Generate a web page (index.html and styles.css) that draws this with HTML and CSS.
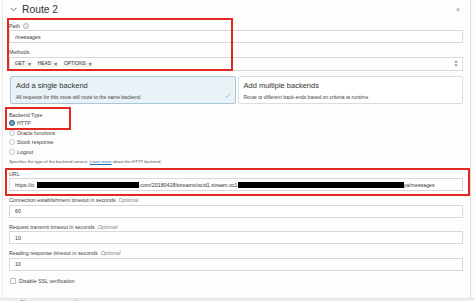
FILE: index.html
```html
<!DOCTYPE html>
<html lang="en">
<head>
  <meta charset="UTF-8" />
  <meta name="viewport" content="width=device-width, initial-scale=1.0" />
  <title>Route 2</title>
  <link rel="stylesheet" href="styles.css">
</head>
<body>
  <div class="page">
    <section class="route">
      <header class="route-head">
        <svg class="chev" width="7" height="5" viewBox="0 0 7 5"><polyline points="0.5,0.8 3.5,3.8 6.5,0.8" fill="none" stroke="#555" stroke-width="0.8"/></svg>
        <h2>Route 2</h2>
        <span class="close">&times;</span>
      </header>

      <div class="form">
        <div class="field first">
          <label class="lbl">Path
            <svg class="info" width="6" height="6" viewBox="0 0 6 6"><circle cx="3" cy="3" r="2.5" fill="none" stroke="#888" stroke-width="0.6"/><line x1="3" y1="2.6" x2="3" y2="4.4" stroke="#888" stroke-width="0.6"/><circle cx="3" cy="1.7" r="0.35" fill="#888"/></svg>
          </label>
          <div class="input">/messages</div>
        </div>

        <div class="field">
          <label class="lbl">Methods</label>
          <div class="input select">
            <span class="tag">GET <b>&times;</b></span>
            <span class="tag">HEAD <b>&times;</b></span>
            <span class="tag">OPTIONS <b>&times;</b></span>
            <svg class="spin" width="4" height="7" viewBox="0 0 4 7"><polygon points="2,0.5 3.6,2.6 0.4,2.6" fill="#777"/><polygon points="2,6.5 3.6,4.4 0.4,4.4" fill="#777"/></svg>
          </div>
        </div>

        <div class="cards">
          <div class="card active">
            <div class="card-title">Add a single backend</div>
            <div class="card-sub">All requests for this route will route to the same backend</div>
            <svg class="tick" width="6" height="5" viewBox="0 0 6 5"><polyline points="0.5,2.8 2,4.3 5.5,0.6" fill="none" stroke="#8a9aa3" stroke-width="0.6"/></svg>
          </div>
          <div class="card">
            <div class="card-title">Add multiple backends</div>
            <div class="card-sub">Route to different back-ends based on criteria at runtime</div>
          </div>
        </div>

        <div class="lbl type-lbl">Backend Type</div>
        <div class="radios">
          <div class="radio on"><span class="dot"></span>HTTP</div>
          <div class="radio"><span class="dot"></span>Oracle functions</div>
          <div class="radio"><span class="dot"></span>Stock response</div>
          <div class="radio"><span class="dot"></span>Logout</div>
        </div>
        <p class="help">Specifies the type of the backend service. <a href="#">Learn more</a> about the HTTP backend.</p>

        <div class="field">
          <label class="lbl">URL</label>
          <div class="input">https://o<span class="redact r1"></span>.com/20180418/streams/ocid1.stream.oc1<span class="redact r2"></span>ya/messages</div>
        </div>

        <div class="field">
          <label class="lbl">Connection establishment timeout in seconds <i>Optional</i></label>
          <div class="input">60</div>
        </div>

        <div class="field">
          <label class="lbl">Request transmit timeout in seconds <i>Optional</i></label>
          <div class="input">10</div>
        </div>

        <div class="field">
          <label class="lbl">Reading response timeout in seconds <i>Optional</i></label>
          <div class="input">10</div>
        </div>

        <div class="check"><span class="box"></span>Disable SSL verification</div>
      </div>
    </section>

    <div class="policies">
      <svg width="5" height="6" viewBox="0 0 5 6"><polyline points="1,0.8 3.6,3 1,5.2" fill="none" stroke="#555" stroke-width="0.7"/></svg>
      <a href="#">Show route request policies</a>
    </div>

    <div class="mark m1"></div>
    <div class="mark m2"></div>
    <div class="mark m3"></div>
  </div>
</body>
</html>
```

FILE: styles.css
```css
body {
  margin: 0;
  width: 474px;
  height: 301px;
  overflow: hidden;
  background: #fcfcfc;
  color: #3a3a3a;
  font-family: "Liberation Sans", Arial, sans-serif;
}

.page {
  position: relative;
  height: 301px;
}

.route {
  box-sizing: border-box;
  margin-left: 2px;
  width: 469px;
  height: 298px;
  background: #fdfdfd;
  border-left: 1px solid #e8e8e8;
  border-right: 1px solid #dcdcdc;
}

.route-head {
  height: 18px;
  display: flex;
  align-items: center;
  padding-left: 7px;
  padding-right: 10px;
}

.route-head .chev {
  margin-right: 5px;
}

.route-head h2 {
  margin: 0;
  font-size: 10.3px;
  font-weight: normal;
  color: #333;
  flex: 1;
}

.close {
  font-size: 7px;
  color: #888;
}

.form {
  padding: 0 7px 0 6px;
}

.lbl {
  display: flex;
  align-items: center;
  gap: 3px;
  height: 7px;
  font-size: 5.3px;
  color: #444;
  white-space: nowrap;
}

.lbl i {
  color: #888;
}

.field {
  margin-top: 5.5px;
}

.field.first {
  margin-top: 4px;
}

.field .input {
  margin-top: 1px;
}

.input {
  box-sizing: border-box;
  height: 13px;
  display: flex;
  align-items: center;
  padding-left: 5px;
  border: 1px solid #d8d8d8;
  background: #fff;
  font-size: 5.3px;
  color: #333;
  white-space: nowrap;
}

.select {
  height: 14px;
  gap: 5px;
  padding-left: 4px;
  padding-right: 4px;
}

.tag {
  display: flex;
  align-items: center;
  gap: 3px;
  padding: 0 1px;
  background: #f4f4f4;
  font-size: 4.8px;
}

.tag b {
  font-size: 5px;
  color: #444;
}

.spin {
  margin-left: auto;
}

.redact {
  display: inline-block;
  height: 6px;
  background: #000;
}

.r1 {
  width: 102px;
  margin-left: 3px;
}

.r2 {
  width: 166px;
}

.cards {
  display: flex;
  gap: 2px;
  margin-top: 5px;
  padding-left: 1px;
}

.card {
  position: relative;
  box-sizing: border-box;
  flex: 1;
  height: 28px;
  padding: 4px 5px 0;
  border: 1px solid #dcdcdc;
  border-radius: 2px;
  background: #fff;
}

.card.active {
  background: #e9f2f6;
  border-color: #a9c6d4;
}

.card-title {
  font-size: 7.5px;
  line-height: 9px;
  color: #333;
}

.card-sub {
  margin-top: 4px;
  font-size: 5px;
  line-height: 7px;
  color: #444;
}

.tick {
  position: absolute;
  right: 4px;
  bottom: 5px;
}

.type-lbl {
  margin-top: 8px;
}

.radio {
  height: 9.6px;
  display: flex;
  align-items: center;
  gap: 2px;
  font-size: 5.3px;
  color: #444;
}

.radio .dot {
  box-sizing: border-box;
  width: 6px;
  height: 6px;
  border-radius: 50%;
  border: 0.7px solid #c8c8c8;
  background: #fff;
}

.radio.on .dot {
  border: 1.6px solid #1f5d78;
  background: #6fa9bd;
}

.help {
  margin: 2px 0 0;
  font-size: 4.3px;
  line-height: 6px;
  color: #555;
}

.help a {
  color: #2a6fb0;
}

.check {
  margin-top: 6px;
  height: 8px;
  display: flex;
  align-items: center;
  gap: 3px;
  padding-left: 1px;
  font-size: 5.3px;
  color: #444;
}

.check .box {
  box-sizing: border-box;
  width: 6px;
  height: 6px;
  border: 0.7px solid #bbb;
  border-radius: 1px;
  background: #fff;
}

.policies {
  height: 3px;
  display: flex;
  align-items: flex-start;
  gap: 4px;
  padding-left: 11px;
  background: #eeeeee;
  border-top: 1px solid #e2e2e2;
  font-size: 5.5px;
  line-height: 7px;
}

.policies svg {
  margin-top: 1px;
}

.policies a {
  color: #3d6fa6;
  text-decoration: none;
}

.mark {
  position: absolute;
  box-sizing: border-box;
  border: 2px solid #e2281f;
}

.m1 {
  left: 7px;
  top: 18px;
  width: 226px;
  height: 53px;
}

.m2 {
  left: 5px;
  top: 107px;
  width: 66px;
  height: 23px;
}

.m3 {
  left: 5px;
  top: 168px;
  width: 465px;
  height: 28px;
}
```
